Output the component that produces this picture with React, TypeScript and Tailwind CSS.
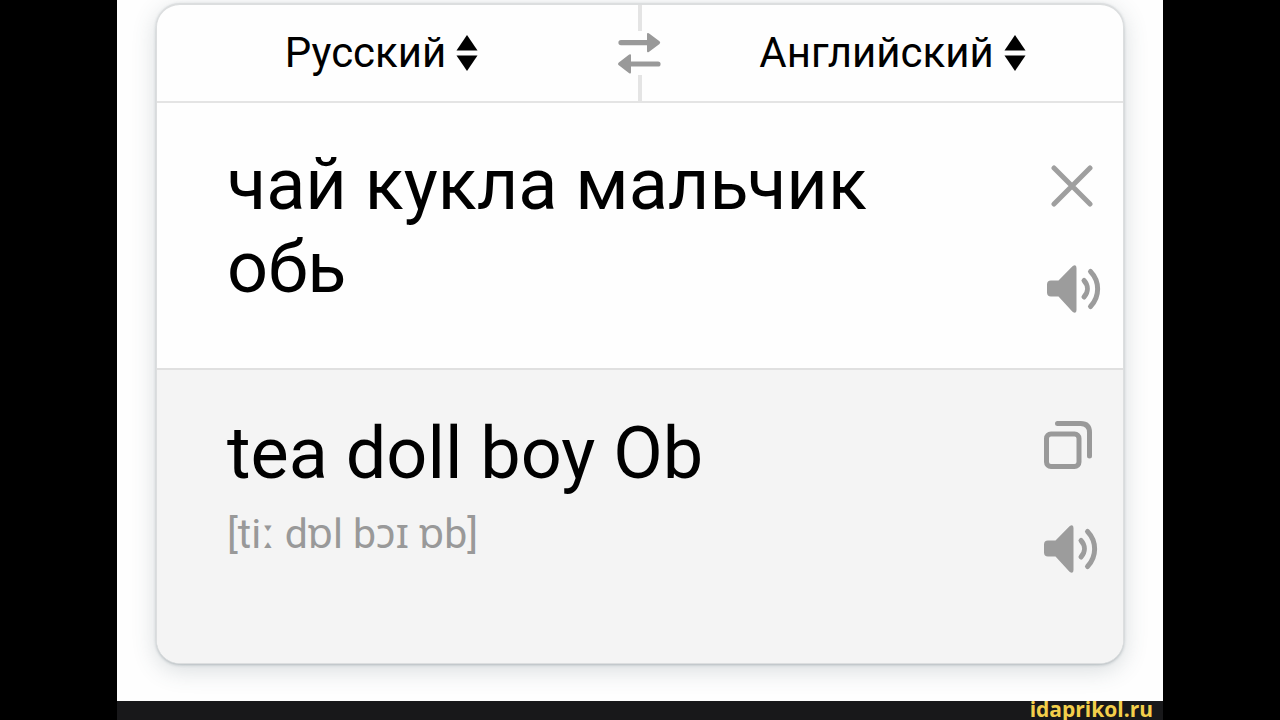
import { useState } from "react";

function SortArrows() {
  return (
    <svg viewBox="0 0 22 36" className="pointer-events-none h-9 w-[22px] shrink-0" fill="#000" aria-hidden="true">
      <path d="M11 0 21.500 15.500H.5Z" />
      <path d="M.5 20.500H21.500L11 36Z" />
    </svg>
  );
}

function SwapIcon() {
  return (
    <svg viewBox="0 0 44 42" className="h-[42px] w-11" fill="#999" aria-hidden="true">
      <path d="M3 8H29V2.200Q29 .2 30.800 1.300L41.500 9.300Q43 10.600 41.500 11.900L30.800 20Q29 21 29 19V13.200H3A2.600 2.600 0 0 1 3 8Z" />
      <path d="M40 29.400H13V23.500Q13 21.500 11.200 22.600L.8 30.600Q-.7 31.900 .8 33.200L11.200 41.200Q13 42.200 13 40.200V34.600H40A2.600 2.600 0 0 0 40 29.400Z" />
    </svg>
  );
}

function CloseIcon() {
  return (
    <svg viewBox="0 0 42 42" className="size-[42px]" stroke="#9f9f9f" strokeWidth="5" strokeLinecap="round" aria-hidden="true">
      <path d="M3 3 39 39M39 3 3 39" />
    </svg>
  );
}

function SpeakerIcon() {
  return (
    <svg viewBox="0 0 54 48" className="h-12 w-[54px]" fill="none" aria-hidden="true">
      <path
        d="M4 15.500H11.500L25.500 1.200Q29.500-1.200 29.500 3V45Q29.500 49.200 25.500 46.800L11.500 31.500H4Q0 31.500 0 27.500V19.500Q0 15.500 4 15.500Z"
        fill="#9c9c9c"
      />
      <path d="M37 15.500C41.500 20.500 41.500 27 37 32M43.500 6.500C53 16.500 53 31.500 43.500 41.500" stroke="#9c9c9c" strokeWidth="5" strokeLinecap="round" />
    </svg>
  );
}

function CopyIcon() {
  return (
    <svg viewBox="0 0 48 48" className="size-12" fill="none" stroke="#999" strokeWidth="5" strokeLinecap="round" aria-hidden="true">
      <rect x="2.500" y="13" width="32.500" height="32.500" rx="4.500" />
      <path d="M13.500 2.500H36.500Q45.500 2.500 45.500 11.500V35" />
    </svg>
  );
}

const languages = ["Русский", "Английский"];

function LanguageSelect({ label, value, onChange }: { label: string; value: string; onChange: (v: string) => void }) {
  return (
    <label className="flex items-center gap-[10px]">
      <select
        aria-label={label}
        value={value}
        onChange={(e) => onChange(e.target.value)}
        className="field-sizing-content h-14 appearance-none bg-transparent text-[42px] leading-[56px] outline-none"
      >
        {languages.map((name) => (
          <option key={name}>{name}</option>
        ))}
      </select>
      <SortArrows />
    </label>
  );
}

export default function App() {
  const [from, setFrom] = useState("Русский");
  const [to, setTo] = useState("Английский");
  const [text, setText] = useState("чай кукла мальчик обь");

  const swap = () => {
    setFrom(to);
    setTo(from);
  };

  return (
    <div className="min-h-screen bg-black font-[Roboto,'Noto_Sans',sans-serif] text-black">
      <div className="mx-auto flex min-h-screen max-w-[1046px] flex-col bg-[#fefefe]">
        <main className="flex-1 px-[39px] pt-[3px] pb-[37px]">
          <div className="overflow-hidden rounded-3xl border border-t-2 border-[#dcdedf] bg-[#fefefe] shadow-[0_6px_24px_rgba(60,80,90,0.2),0_1px_3px_rgba(60,80,90,0.3)]">
            <header className="grid h-[98px] grid-cols-[1fr_auto_1fr] border-b-2 border-[#e4e4e4]">
              <div className="flex items-center justify-center pr-3">
                <LanguageSelect label="Язык оригинала" value={from} onChange={setFrom} />
              </div>
              <div className="flex w-11 flex-col items-center justify-between">
                <span className="h-[26px] w-1 bg-[#e4e4e4]" />
                <button type="button" aria-label="Поменять языки местами" onClick={swap}>
                  <SwapIcon />
                </button>
                <span className="h-[26px] w-1 bg-[#e4e4e4]" />
              </div>
              <div className="flex items-center justify-center">
                <LanguageSelect label="Язык перевода" value={to} onChange={setTo} />
              </div>
            </header>

            <section className="flex h-[267px] border-b-2 border-[#e0e0e0] pt-10 pl-[70px]">
              <textarea
                aria-label="Текст для перевода"
                value={text}
                onChange={(e) => setText(e.target.value)}
                spellCheck={false}
                className="h-[180px] min-w-0 flex-1 resize-none overflow-hidden bg-transparent pr-20 text-[72px] leading-[83px] outline-none"
              />
              <div className="flex w-[76px] flex-col items-start gap-[58px] pt-[22px]">
                <button type="button" aria-label="Очистить" className="pl-1" onClick={() => setText("")}>
                  <CloseIcon />
                </button>
                <button type="button" aria-label="Прослушать оригинал">
                  <SpeakerIcon />
                </button>
              </div>
            </section>

            <section className="flex h-[293px] bg-[#f4f4f4] pt-[42px] pl-[70px]">
              <div className="min-w-0 flex-1">
                <p className="text-[72px] leading-[84px]">tea doll boy Ob</p>
                <p className="mt-[14px] text-[41px] leading-[48px] text-[#999]">[tiː dɒl bɔɪ ɒb]</p>
              </div>
              <div className="flex w-[79px] flex-col items-start gap-14 pt-[9px]">
                <button type="button" aria-label="Скопировать перевод">
                  <CopyIcon />
                </button>
                <button type="button" aria-label="Прослушать перевод">
                  <SpeakerIcon />
                </button>
              </div>
            </section>
          </div>
        </main>
        <footer className="flex h-[19px] items-end justify-end bg-[#18181a] pr-[10px]">
          <a href="#" className="font-['Open_Sans',sans-serif] text-[21px] leading-[21px] font-bold text-[#f3cf4b]">
            idaprikol.ru
          </a>
        </footer>
      </div>
    </div>
  );
}
